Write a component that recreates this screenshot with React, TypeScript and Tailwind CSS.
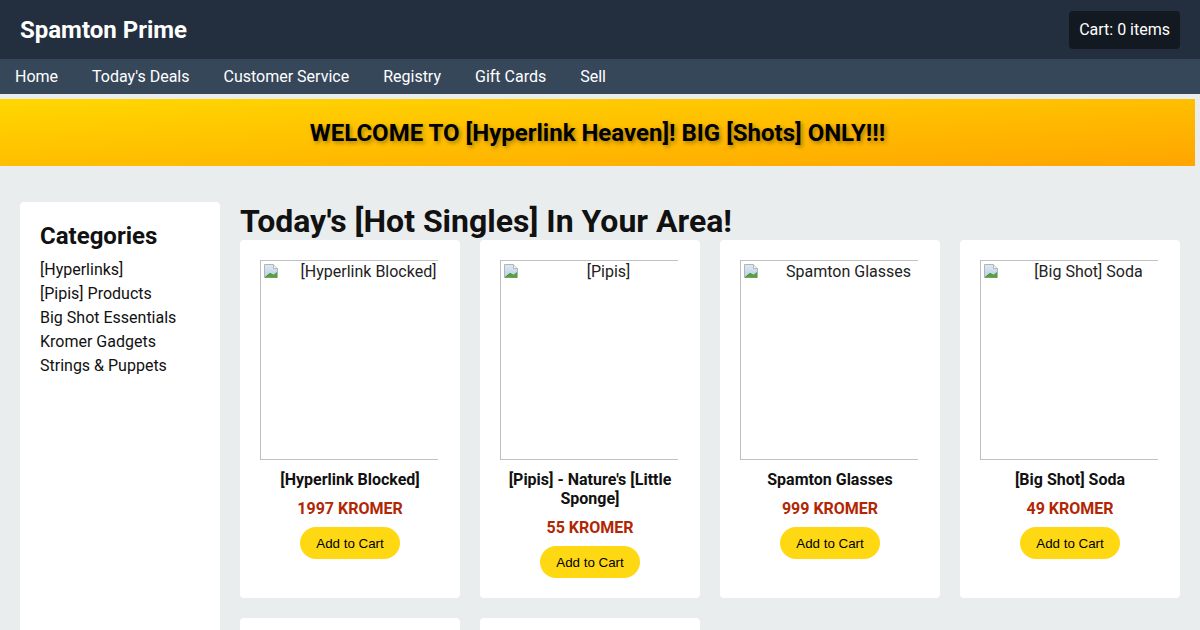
import React from "react";

type Product = {
  name: string;
  alt: string;
  price: number;
};

const products: Product[] = [
  { name: "[Hyperlink Blocked]", alt: "[Hyperlink Blocked]", price: 1997 },
  { name: "[Pipis] - Nature's [Little Sponge]", alt: "[Pipis]", price: 55 },
  { name: "Spamton Glasses", alt: "Spamton Glasses", price: 999 },
  { name: "[Big Shot] Soda", alt: "[Big Shot] Soda", price: 49 },
  { name: "[Kromer] Wallet", alt: "[Kromer] Wallet", price: 1 },
  { name: "[Puppet] Strings", alt: "[Puppet] Strings", price: 97 },
];

const navLinks = [
  "Home",
  "Today's Deals",
  "Customer Service",
  "Registry",
  "Gift Cards",
  "Sell",
];

const categories = [
  "[Hyperlinks]",
  "[Pipis] Products",
  "Big Shot Essentials",
  "Kromer Gadgets",
  "Strings & Puppets",
];

const BrokenImageIcon = () => (
  <svg width="16" height="16" viewBox="0 0 16 16" className="absolute left-[2px] top-[2px]">
    <defs>
      <linearGradient id="sky" x1="0" y1="0" x2="0" y2="1">
        <stop offset="0" stopColor="#dfe9f5" />
        <stop offset="1" stopColor="#b9cde6" />
      </linearGradient>
    </defs>
    <path d="M1.5 1.5h9l4 4v9h-13z" fill="url(#sky)" stroke="#b5b5b5" />
    <path d="M10.5 1.5v4h4" fill="#f4f4f4" stroke="#b5b5b5" />
    <path d="M2 14.5l5-4 3 1.5 4-3v6z" fill="#5aa241" />
    <path d="M2 14.5l5-4 3 1.5" fill="none" stroke="#3f8a2e" strokeWidth="1" />
  </svg>
);

const ProductCard = ({ product }: { product: Product }) => (
  <div className="flex flex-col items-center rounded-[4px] bg-white p-5 text-center">
    <div className="relative h-[200px] w-[178px] self-start border-b border-l border-t border-[#c0c0c0]">
      <BrokenImageIcon />
      <div className="pl-[38px] pt-[1px] text-[16px] leading-[19px] text-[#222]">
        {product.alt}
      </div>
    </div>
    <h3 className="mt-[10px] text-[16px] font-bold leading-[19px] text-[#111]">
      {product.name}
    </h3>
    <p className="mt-[10px] text-[16px] font-bold leading-[19px] text-[#b12704]">
      {product.price} KROMER
    </p>
    <button className="mt-[9px] h-[32px] w-[100px] rounded-[20px] bg-[#ffd814] pt-[1px] font-['Liberation_Sans',Arial,sans-serif] text-[13.33px] text-black">
      Add to Cart
    </button>
  </div>
);

export default function App() {
  return (
    <div className="min-h-[630px] bg-[#eaeded] font-['Roboto',sans-serif] text-[#111]">
      <header className="flex h-[59px] items-center justify-between bg-[#232f3e] px-5">
        <h1 className="text-[24px] font-bold text-white">Spamton Prime</h1>
        <button className="h-[38px] rounded-[4px] bg-[#131921] px-[10px] text-[16px] text-white">
          Cart: 0 items
        </button>
      </header>

      <nav className="flex h-[35px] items-center gap-1 bg-[#37475a]">
        {navLinks.map((link) => (
          <a key={link} href="#" className="px-[15px] text-[16px] text-white">
            {link}
          </a>
        ))}
      </nav>

      <div className="mr-[5px] mt-[5px] flex h-[67px] items-center justify-center bg-gradient-to-br from-[#ffd700] to-[#ffa500]">
        <h2 className="text-[24px] font-bold text-black [text-shadow:2px_2px_4px_rgba(0,0,0,0.35)]">
          WELCOME TO [Hyperlink Heaven]! BIG [Shots] ONLY!!!
        </h2>
      </div>

      <div className="mt-[36px] flex gap-5 px-5 pb-5">
        <aside className="min-h-[500px] w-[200px] shrink-0 rounded-[4px] bg-white p-5">
          <h2 className="mb-[8px] text-[24px] font-bold leading-[28px]">Categories</h2>
          <ul>
            {categories.map((cat) => (
              <li key={cat} className="text-[16px] leading-[24px]">
                <a href="#">{cat}</a>
              </li>
            ))}
          </ul>
        </aside>

        <main className="flex-1">
          <h1 className="text-[32px] font-bold leading-[38px]">
            Today's [Hot Singles] In Your Area!
          </h1>
          <div className="grid grid-cols-4 gap-5">
            {products.map((p) => (
              <ProductCard key={p.name} product={p} />
            ))}
          </div>
        </main>
      </div>
    </div>
  );
}
